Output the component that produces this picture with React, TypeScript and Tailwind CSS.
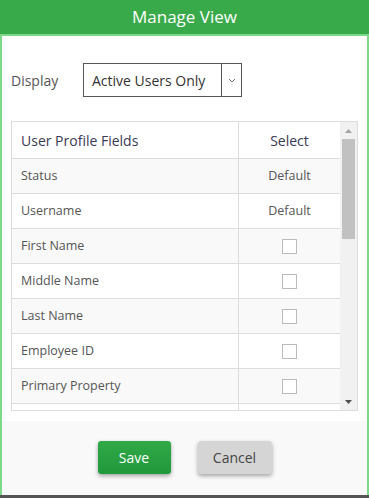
import React from 'react';

const rows = [
  { label: 'Status', value: 'Default' },
  { label: 'Username', value: 'Default' },
  { label: 'First Name' },
  { label: 'Middle Name' },
  { label: 'Last Name' },
  { label: 'Employee ID' },
  { label: 'Primary Property' },
];

export default function App() {
  return (
    <div className="w-[369px] h-[498px] bg-[#555] font-['Open_Sans',sans-serif] flex flex-col">
      {/* header */}
      <div className="h-[34px] bg-[#39aa4a] flex items-center justify-center text-white text-[17px]">
        Manage View
      </div>

      <div className="flex-1 flex flex-col border-x-2 border-t-2 border-[#7dd98a] bg-white">
        {/* display select */}
        <div className="flex items-center h-[69px] pl-[9px] pt-[27px] pb-[8px]">
          <span className="text-[14px] text-[#555] w-[72px]">Display</span>
          <div className="flex h-[34px] w-[159px] border border-[#555]">
            <div className="flex-1 flex items-center pl-[8px] text-[14px] text-[#333] border-r border-[#555]">
              Active Users Only
            </div>
            <div className="w-[19px] flex items-center justify-center">
              <svg width="8" height="5" viewBox="0 0 8 5" fill="none" stroke="#666" strokeWidth="1">
                <path d="M1 1l3 3 3-3" />
              </svg>
            </div>
          </div>
        </div>

        {/* table */}
        <div className="mx-[9px] mt-[16px] h-[290px] border border-[#ddd] flex overflow-hidden">
          <div className="flex-1 flex flex-col overflow-hidden">
            <div className="flex shrink-0 h-[37px] border-b border-[#ddd] bg-white text-[14px] text-[#3a3a55]">
              <div className="w-[227px] border-r border-[#ddd] flex items-center pl-[9px]">
                User Profile Fields
              </div>
              <div className="flex-1 flex items-center justify-center">Select</div>
            </div>
            {rows.map((r, i) => (
              <div
                key={r.label}
                className={`flex shrink-0 h-[35px] border-b border-[#ddd] text-[12.5px] text-[#555] ${
                  i % 2 === 0 ? 'bg-[#f9f9f9]' : 'bg-white'
                }`}
              >
                <div className="w-[227px] border-r border-[#ddd] flex items-center pl-[9px]">{r.label}</div>
                <div className="flex-1 flex items-center justify-center">
                  {r.value ? (
                    <span>{r.value}</span>
                  ) : (
                    <span className="w-[15px] h-[15px] border border-[#bbb] bg-white" />
                  )}
                </div>
              </div>
            ))}
            {/* next row, scrolled out of view */}
            <div className="flex shrink-0 h-[35px] bg-white">
              <div className="w-[227px] border-r border-[#ddd]" />
              <div className="flex-1" />
            </div>
          </div>

          {/* scrollbar */}
          <div className="w-[17px] bg-[#f1f1f1] flex flex-col items-center">
            <div className="h-[17px] flex items-center justify-center">
              <svg width="7" height="4" viewBox="0 0 7 4">
                <path d="M0 4L3.5 0 7 4z" fill="#a3a3a3" />
              </svg>
            </div>
            <div className="w-[13px] h-[100px] bg-[#c1c1c1]" />
            <div className="flex-1" />
            <div className="h-[17px] flex items-center justify-center">
              <svg width="7" height="4" viewBox="0 0 7 4">
                <path d="M0 0L3.5 4 7 0z" fill="#505050" />
              </svg>
            </div>
          </div>
        </div>

        {/* footer */}
        <div className="mt-[10px] flex-1 bg-[#f9f9f9] flex justify-center gap-[27px] pt-[20px]">
          <button className="w-[73px] h-[33px] rounded-[3px] bg-gradient-to-b from-[#30a947] to-[#21983b] text-white text-[14px] shadow-[0_2px_4px_rgba(0,0,0,0.35)]">
            Save
          </button>
          <button className="w-[74px] h-[33px] rounded-[3px] bg-[#d5d5d5] text-[#444] text-[14px] shadow-[0_2px_4px_rgba(0,0,0,0.35)]">
            Cancel
          </button>
        </div>
      </div>
      <div className="h-[3px] bg-[#555]" />
    </div>
  );
}
